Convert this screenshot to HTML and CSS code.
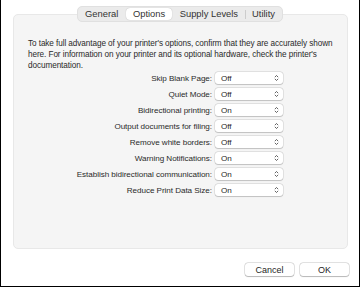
FILE: index.html
```html
<!DOCTYPE html>
<html lang="en">
<head>
    <meta charset="UTF-8">
    <title>Printer Options</title>
    <link rel="stylesheet" href="styles.css">
</head>
<body>
    <div class="window">
        <div class="tabs">
            <span class="tab">General</span>
            <span class="tab active">Options</span>
            <span class="tab">Supply Levels</span>
            <span class="sep"></span>
            <span class="tab">Utility</span>
        </div>

        <div class="panel">
            <p class="intro">To take full advantage of your printer's options, confirm that they are accurately shown<br>here. For information on your printer and its optional hardware, check the printer's<br>documentation.</p>

            <div class="options">
                <label>Skip Blank Page:</label>
                <div class="select"><span>Off</span><svg viewBox="0 0 6 9"><path d="M1 3.5 L3 1.5 L5 3.5 M1 5.5 L3 7.5 L5 5.5"/></svg></div>

                <label>Quiet Mode:</label>
                <div class="select"><span>Off</span><svg viewBox="0 0 6 9"><path d="M1 3.5 L3 1.5 L5 3.5 M1 5.5 L3 7.5 L5 5.5"/></svg></div>

                <label>Bidirectional printing:</label>
                <div class="select"><span>On</span><svg viewBox="0 0 6 9"><path d="M1 3.5 L3 1.5 L5 3.5 M1 5.5 L3 7.5 L5 5.5"/></svg></div>

                <label>Output documents for filing:</label>
                <div class="select"><span>Off</span><svg viewBox="0 0 6 9"><path d="M1 3.5 L3 1.5 L5 3.5 M1 5.5 L3 7.5 L5 5.5"/></svg></div>

                <label>Remove white borders:</label>
                <div class="select"><span>Off</span><svg viewBox="0 0 6 9"><path d="M1 3.5 L3 1.5 L5 3.5 M1 5.5 L3 7.5 L5 5.5"/></svg></div>

                <label>Warning Notifications:</label>
                <div class="select"><span>On</span><svg viewBox="0 0 6 9"><path d="M1 3.5 L3 1.5 L5 3.5 M1 5.5 L3 7.5 L5 5.5"/></svg></div>

                <label>Establish bidirectional communication:</label>
                <div class="select"><span>On</span><svg viewBox="0 0 6 9"><path d="M1 3.5 L3 1.5 L5 3.5 M1 5.5 L3 7.5 L5 5.5"/></svg></div>

                <label>Reduce Print Data Size:</label>
                <div class="select"><span>On</span><svg viewBox="0 0 6 9"><path d="M1 3.5 L3 1.5 L5 3.5 M1 5.5 L3 7.5 L5 5.5"/></svg></div>
            </div>
        </div>

        <div class="buttons">
            <button>Cancel</button>
            <button>OK</button>
        </div>
    </div>
</body>
</html>
```

FILE: styles.css
```css
/* Fenêtre */
body {
    margin: 0;
    padding: 0;
    background: #fff;
    font-family: 'Liberation Sans', Arial, sans-serif;
    color: #262626;
}

.window {
    width: 360px;
    height: 287px;
    box-sizing: border-box;
    border: 1px solid #000;
    border-top: none;
    background: #fff;
    overflow: hidden;
}

/* Onglets */
.tabs {
    position: relative;
    z-index: 1;
    display: flex;
    align-items: center;
    width: fit-content;
    margin: 6px auto 0;
    height: 14px;
    padding: 0 1px;
    background: #ebebeb;
    border: 1px solid #e0e0e0;
    border-radius: 5px;
    font-size: 9.4px;
}

.tab {
    padding: 0 6.5px;
    line-height: 12px;
    color: #333;
}

.tab.active {
    background: #fff;
    border-radius: 4px;
    padding: 0 7px;
    box-shadow: 0 0 1px rgba(0, 0, 0, 0.3);
    margin: 0 1px;
}

.sep {
    width: 1px;
    height: 9px;
    background: #ccc;
}

/* Panneau */
.panel {
    margin: -8px 11px 0 12px;
    height: 235px;
    box-sizing: border-box;
    padding: 23px 6px 0 14px;
    background: #f5f5f5;
    border: 1px solid #e8e8e8;
    border-radius: 5px;
}

.intro {
    margin: 0 0 -1px;
    font-size: 8.2px;
    letter-spacing: -0.08px;
    line-height: 11px;
    white-space: nowrap;
    color: #2a2a2a;
}

.options {
    display: grid;
    grid-template-columns: 184px 68px;
    column-gap: 3px;
    grid-auto-rows: 16px;
    align-items: center;
    font-size: 8.1px;
    letter-spacing: -0.05px;
}

.options label {
    text-align: right;
    color: #2a2a2a;
}

.select {
    display: flex;
    align-items: center;
    justify-content: space-between;
    height: 12px;
    padding: 0 4px 0 6px;
    background: #fff;
    border-radius: 3px;
    box-shadow: 0 0 0 0.5px rgba(0, 0, 0, 0.15), 0 0.5px 1px rgba(0, 0, 0, 0.15);
}

.select svg {
    width: 5px;
    height: 8px;
    fill: none;
    stroke: #444;
    stroke-width: 1;
}

/* Boutons */
.buttons {
    display: flex;
    justify-content: flex-end;
    gap: 6px;
    margin: 14px 10px 0 0;
}

.buttons button {
    width: 49px;
    height: 13px;
    padding: 0;
    background: #fff;
    border: none;
    border-radius: 3px;
    box-shadow: 0 0 0 0.5px rgba(0, 0, 0, 0.2), 0 0.5px 1px rgba(0, 0, 0, 0.2);
    font-family: inherit;
    font-size: 9px;
    color: #262626;
}
```
